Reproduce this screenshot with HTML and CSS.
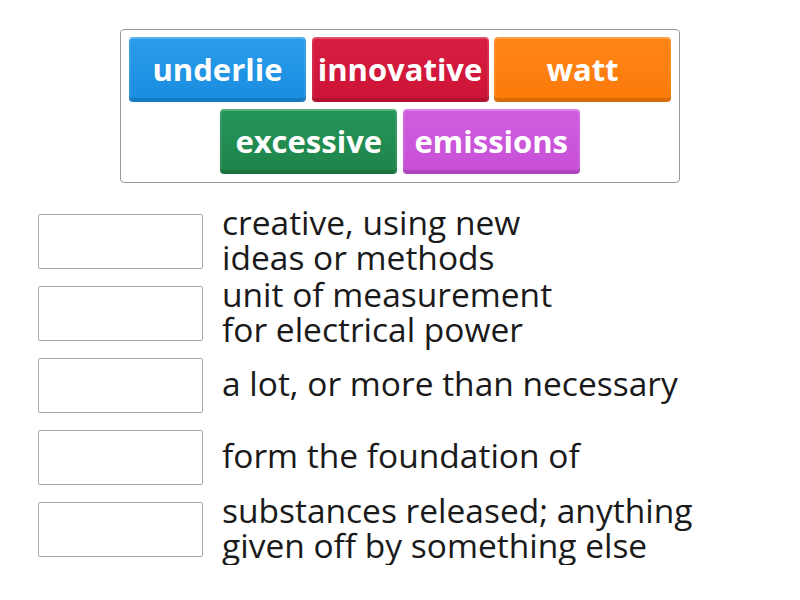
FILE: index.html
```html
<!DOCTYPE html>
<html>
<head>
<meta charset="utf-8">
<link rel="stylesheet" href="styles.css">
</head>
<body>
<div class="bank">
  <div class="tile blue">underlie</div>
  <div class="tile red">innovative</div>
  <div class="tile orange">watt</div>
  <div class="tile green">excessive</div>
  <div class="tile purple">emissions</div>
</div>
<div class="list">
  <div class="row"><div class="slot"></div><div class="def">creative, using new<br>ideas or methods</div></div>
  <div class="row"><div class="slot"></div><div class="def">unit of measurement<br>for electrical power</div></div>
  <div class="row"><div class="slot"></div><div class="def">a lot, or more than necessary</div></div>
  <div class="row"><div class="slot"></div><div class="def">form the foundation of</div></div>
  <div class="row"><div class="slot"></div><div class="def">substances released; anything<br>given off by something else</div></div>
</div>
</body>
</html>
```
FILE: styles.css
```css
html, body {
  margin: 0;
  padding: 0;
  background: #fff;
}
body {
  font-family: "Open Sans", "Liberation Sans", sans-serif;
  color: #1a1a1a;
}
.bank {
  box-sizing: border-box;
  width: 560px;
  margin: 29px auto 0;
  padding: 7px 8px 8px;
  border: 1px solid #9a9a9a;
  border-radius: 4px;
  display: flex;
  flex-wrap: wrap;
  justify-content: center;
  gap: 7px 5.5px;
}
.tile {
  box-sizing: border-box;
  width: 177px;
  height: 65px;
  border-radius: 4px;
  color: #fff;
  font-weight: 700;
  font-size: 31px;
  display: flex;
  align-items: center;
  justify-content: center;
  padding-bottom: 2px;
  white-space: nowrap;
  box-shadow: inset 0 -4px 0 rgba(0,0,0,0.13), inset 0 2px 0 rgba(255,255,255,0.22), inset 2px 0 0 rgba(255,255,255,0.08), inset -2px 0 0 rgba(255,255,255,0.08);
}
.blue { background: linear-gradient(#2a9cea, #1a8de0); }
.red { background: linear-gradient(#d81d42, #cc1436); }
.orange { background: linear-gradient(#ff8517, #fb7a09); }
.green { background: linear-gradient(#25955a, #1e8448); }
.purple { background: linear-gradient(#d05ee0, #c64ed6); }
.list {
  margin: 22px 0 0 38px;
  display: flex;
  flex-direction: column;
}
.row {
  height: 72px;
  display: flex;
  align-items: center;
}
.slot {
  box-sizing: border-box;
  width: 165px;
  height: 55px;
  border: 1px solid #a9a9a9;
  border-radius: 2px;
  flex: none;
}
.def {
  margin-left: 19px;
  padding-bottom: 3px;
  font-size: 33.5px;
  line-height: 35px;
  white-space: nowrap;
}
```
